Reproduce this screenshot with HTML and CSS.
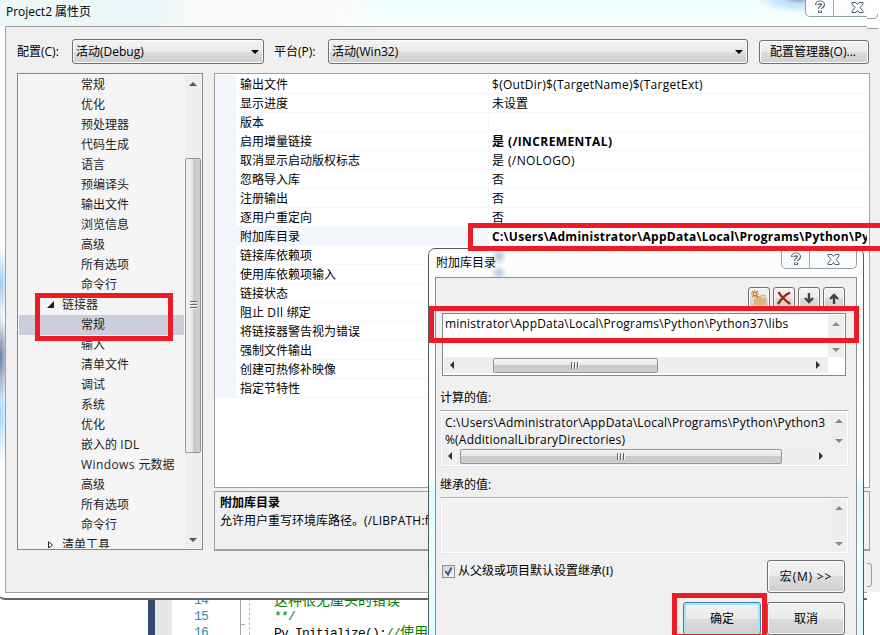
FILE: index.html
```html
<!DOCTYPE html>
<html lang="zh-CN">
<head>
    <meta charset="UTF-8">
    <title>Project2 属性页</title>
    <link rel="stylesheet" href="styles.css">
</head>
<body>
    <div class="editor">
        <div class="splitter"></div>
        <div class="margin"></div>
        <div class="numbers"><div>14</div><div>15</div><div>16</div></div>
        <div class="fold"></div>
        <div class="indent"></div>
        <div class="code">
            <div class="comment"><span class="cn">这种很无厘头的错误</span></div>
            <div class="comment">**/</div>
            <div>Py_Initialize();<span class="comment">//<span class="cn">使用</span></span></div>
        </div>
    </div>

    <div class="window main">
        <div class="title">Project2 属性页</div>
        <div class="client">
            <div class="config">
                <label class="config-label">配置(C):</label>
                <div class="combo combo-config">活动(Debug)<i class="arrow down black"></i></div>
                <label class="platform-label">平台(P):</label>
                <div class="combo combo-platform">活动(Win32)<i class="arrow down black"></i></div>
                <div class="button manager">配置管理器(O)...</div>
            </div>
            <div class="panels">
                <div class="tree">
                    <div class="items">
                        <div class="item">常规</div>
                        <div class="item">优化</div>
                        <div class="item">预处理器</div>
                        <div class="item">代码生成</div>
                        <div class="item">语言</div>
                        <div class="item">预编译头</div>
                        <div class="item">输出文件</div>
                        <div class="item">浏览信息</div>
                        <div class="item">高级</div>
                        <div class="item">所有选项</div>
                        <div class="item">命令行</div>
                        <div class="item parent"><svg width="8" height="8"><path d="M7 0v7H0z" fill="#222"/></svg>链接器</div>
                        <div class="item selected">常规</div>
                        <div class="item">输入</div>
                        <div class="item">清单文件</div>
                        <div class="item">调试</div>
                        <div class="item">系统</div>
                        <div class="item">优化</div>
                        <div class="item">嵌入的 <span class="wide">IDL</span></div>
                        <div class="item"><span class="wide">Windows </span>元数据</div>
                        <div class="item">高级</div>
                        <div class="item">所有选项</div>
                        <div class="item">命令行</div>
                        <div class="item parent"><svg width="8" height="8"><path d="M1.5 .8v6.4L5.5 4z" fill="#fff" stroke="#222"/></svg>清单工具</div>
                    </div>
                    <div class="scroll vertical tree-scroll">
                        <i class="arrow up"></i>
                        <div class="thumb"><span class="grip"></span></div>
                        <i class="arrow down"></i>
                    </div>
                </div>
                <div class="properties">
                    <div class="grid">
                        <div class="row"><span>输出文件</span><span class="macro-value">$(OutDir)$(TargetName)$(TargetExt)</span></div>
                        <div class="row"><span>显示进度</span><span>未设置</span></div>
                        <div class="row"><span>版本</span><span></span></div>
                        <div class="row"><span>启用增量链接</span><span class="bold wide">是 (/INCREMENTAL)</span></div>
                        <div class="row"><span>取消显示启动版权标志</span><span class="wide">是 (/NOLOGO)</span></div>
                        <div class="row"><span>忽略导入库</span><span>否</span></div>
                        <div class="row"><span>注册输出</span><span>否</span></div>
                        <div class="row"><span>逐用户重定向</span><span>否</span></div>
                        <div class="row current"><span>附加库目录</span><span class="bold path">C:\Users\Administrator\AppData\Local\Programs\Python\Python37\libs</span></div>
                        <div class="row"><span>链接库依赖项</span><span></span></div>
                        <div class="row"><span>使用库依赖项输入</span><span></span></div>
                        <div class="row"><span>链接状态</span><span></span></div>
                        <div class="row"><span>阻止 <b class="dll">Dll</b> 绑定</span><span></span></div>
                        <div class="row"><span>将链接器警告视为错误</span><span></span></div>
                        <div class="row"><span>强制文件输出</span><span></span></div>
                        <div class="row"><span>创建可热修补映像</span><span></span></div>
                        <div class="row"><span>指定节特性</span><span></span></div>
                    </div>
                    <div class="help">
                        <div class="bold">附加库目录</div>
                        <div>允许用户重写环境库路径。<span class="libpath">(/LIBPATH:folder)</span></div>
                    </div>
                </div>
            </div>
        </div>
        <div class="caption">
            <span class="help-btn"><svg width="12" height="14"><path d="M3 5C3 1.500 9 1.500 9 5C9 7 6 6.500 6 9M6 10.500V13" fill="none" stroke="#555968" stroke-width="4"/><path d="M3 4.500C3 1.500 9 1.500 9 4.500C9 7 6 6.500 6 9M6 10.700V12.300" fill="none" stroke="#fff" stroke-width="1.800"/></svg></span>
            <span class="close-btn"><svg width="13" height="11"><path d="M1 .5h4l1.500 2L8 .5h4v1.500L9 5.500l3 3.500v1.500H8l-1.500-2-1.500 2H1V9l3-3.500L1 2z" fill="#fff" stroke="#555968"/></svg></span>
        </div>
        <div class="edge edge-top"></div>
        <div class="edge edge-bottom"></div>
        <svg class="remains" width="11" height="606"><path d="M0 18.500H7Q10.500 18.500 10.500 14M0 28.500H11M0 563.500H2Q4.500 563.500 4.500 566V584Q4.500 586.500 2 586.500H0" fill="none" stroke="#999"/></svg>
    </div>

    <div class="window dialog">
        <div class="title">附加库目录</div>
        <div class="client">
            <div class="tools">
                <div class="button tool"><svg width="16" height="16"><path d="M5 6h4l1-1h5v10H3V9h2z" fill="#dcb67a"/><path d="M10.500 7h4" stroke="#fff"/><path d="M4 0v8M0 4h8M1 1l6 6M7 1L1 7" stroke="#c27d1a" stroke-width="1.100"/><circle cx="4" cy="4" r="1" fill="#fff"/></svg></div>
                <div class="button tool"><svg width="16" height="16"><path d="M2.500 2Q6 8 14 14M14 2.500Q7 6 2 14" fill="none" stroke="#a1260d" stroke-width="2.400"/></svg></div>
                <div class="button tool"><svg width="16" height="16"><path d="M8 3v9M4 8l4 4 4-4" fill="none" stroke="#424242" stroke-width="2.400"/></svg></div>
                <div class="button tool"><svg width="16" height="16"><path d="M8 14V5M4 9l4-4 4 4" fill="none" stroke="#424242" stroke-width="2.400"/></svg></div>
            </div>
            <div class="box edit">
                <div class="text">ministrator\AppData\Local\Programs\Python\Python37\libs</div>
                <div class="scroll vertical"><i class="arrow up"></i><i class="arrow down"></i></div>
                <div class="scroll horizontal"><i class="arrow left"></i><div class="thumb"><span class="grip"></span></div><i class="arrow right"></i></div>
            </div>
            <div class="label">计算的值:</div>
            <div class="box computed">
                <div class="text">C:\Users\Administrator\AppData\Local\Programs\Python\Python3<br>%(AdditionalLibraryDirectories)</div>
                <div class="scroll vertical"><i class="arrow up"></i><i class="arrow down"></i></div>
                <div class="scroll horizontal"><i class="arrow left"></i><div class="thumb"><span class="grip"></span></div><i class="arrow right"></i></div>
            </div>
            <div class="label">继承的值:</div>
            <div class="box inherited">
                <div class="text"></div>
                <div class="scroll vertical"><i class="arrow up"></i><i class="arrow down"></i></div>
            </div>
            <div class="inherit">
                <span class="check"><svg width="9" height="9"><path d="M1.500 4L4 7.500L7.500 .5" fill="none" stroke="#3f5795" stroke-width="2"/></svg></span>
                从父级或项目默认设置继承(<span class="serif">I</span>)
            </div>
            <div class="buttons">
                <div class="button macro">宏(M) &gt;&gt;</div>
                <div class="button ok">确定</div>
                <div class="button cancel">取消</div>
            </div>
        </div>
        <div class="caption">
            <span class="help-btn"><svg width="12" height="14"><path d="M3 5C3 1.500 9 1.500 9 5C9 7 6 6.500 6 9M6 10.500V13" fill="none" stroke="#555968" stroke-width="4"/><path d="M3 4.500C3 1.500 9 1.500 9 4.500C9 7 6 6.500 6 9M6 10.700V12.300" fill="none" stroke="#fff" stroke-width="1.800"/></svg></span>
            <span class="close-btn"><svg width="13" height="11"><path d="M1 .5h4l1.500 2L8 .5h4v1.500L9 5.500l3 3.500v1.500H8l-1.500-2-1.500 2H1V9l3-3.500L1 2z" fill="#fff" stroke="#555968"/></svg></span>
        </div>
    </div>

    <div class="mark mark-tree"></div>
    <div class="mark mark-path"></div>
    <div class="mark mark-edit"></div>
    <div class="mark mark-ok"></div>
</body>
</html>
```

FILE: styles.css
```css
* {
    box-sizing: border-box;
}
body {
    position: relative;
    margin: 0;
    width: 880px;
    height: 635px;
    overflow: hidden;
    background: #fff;
    color: #000;
    font: 12px/18px "Open Sans", "Noto Sans CJK SC", sans-serif;
    white-space: nowrap;
}
svg {
    display: block;
}
.bold {
    font-weight: bold;
}
.wide {
    letter-spacing: 0.4px;
}
.macro-value,
.path {
    letter-spacing: 0.27px;
}
.libpath {
    letter-spacing: 0.2px;
}
.dll {
    font-weight: normal;
    letter-spacing: 0.6px;
}
.serif {
    font-family: "Liberation Serif", serif;
}

/* code editor behind the windows */
.editor {
    position: absolute;
    left: 148px;
    top: 593px;
    width: 290px;
    height: 42px;
    display: flex;
    overflow: hidden;
    font: 13px/16px "Liberation Mono", "Noto Sans CJK SC", monospace;
    letter-spacing: -0.8px;
}
.splitter {
    width: 7px;
    background: #36486d;
}
.margin {
    width: 17px;
    background: #e6e7e8;
}
.numbers {
    width: 68px;
    padding-left: 22px;
    color: #2b91af;
}
.fold {
    width: 9px;
    border-left: 1px solid #a5a5a5;
    background: linear-gradient(#a5a5a5, #a5a5a5) 0 31px / 4px 1px no-repeat;
}
.indent {
    width: 25px;
    border-left: 1px dashed #bbb;
}
.comment {
    color: #008000;
}
.cn {
    font-size: 14px;
    letter-spacing: 0;
}
.code > div {
    height: 16px;
}

/* windows */
.window {
    position: absolute;
}
.window .client {
    background: #f0f0f0;
}
.main {
    left: -2px;
    top: -6px;
    width: 882px;
    height: 606px;
    padding: 6px 0 0 7px;
    border-bottom: 2px solid #606568;
    border-radius: 0 0 0 7px;
    background:
        radial-gradient(ellipse 10px 44px at 2px 363px, #667b9f, transparent),
        radial-gradient(ellipse 10px 40px at 2px 290px, #9fcbf3, transparent),
        radial-gradient(ellipse 10px 50px at 2px 420px, #a8d5f8, transparent),
        radial-gradient(ellipse 16px 5px at 800px 5px, #8a9db5, transparent),
        radial-gradient(ellipse 44px 13px at 802px 6px, #c4e6fb 50%, transparent),
        linear-gradient(100deg, #ebf8f7 0 160px, #fafafa 200px 340px, transparent 380px) 0 0 / 450px 32px no-repeat,
        linear-gradient(#effdfd, #f4ffff 24px, #fff 32px);
}
.main .title {
    height: 26px;
    line-height: 24px;
    padding-left: 1px;
}
.main .client {
    height: 567px;
    padding: 12px 0 0 11px;
    border: 1px solid #a0a0a0;
    border-right: 0;
}
.config {
    display: flex;
    height: 25px;
    line-height: 24px;
}
.config label {
    line-height: 26px;
}
.config-label {
    width: 55px;
}
.platform-label {
    width: 54px;
}
.combo,
.button {
    border: 1px solid #707070;
    border-radius: 3px;
    box-shadow: inset 0 0 0 1px #fbfbfb;
    background: linear-gradient(#f2f2f2, #ebebeb 50%, #dddddd 50%, #cfcfcf);
}
.combo {
    flex: none;
    display: flex;
    justify-content: space-between;
    align-items: center;
    padding: 0 4px 0 3px;
}
.combo-config {
    width: 192px;
    margin-right: 10px;
}
.combo-platform {
    width: 420px;
    margin-right: 11px;
}
.button {
    display: flex;
    justify-content: center;
    align-items: center;
}
.manager {
    flex: none;
    width: 110px;
    height: 24px;
    margin-top: 1px;
    padding-right: 2px;
}
.panels {
    display: flex;
    gap: 11px;
    margin-top: 9px;
}

/* arrows and scrollbars */
.arrow {
    flex: none;
    width: 0;
    height: 0;
    border: 4px solid transparent;
}
.arrow.down {
    border-top-color: #555;
    border-bottom: 0;
}
.arrow.up {
    border-bottom-color: #555;
    border-top: 0;
}
.arrow.left {
    border-right-color: #333;
    border-left: 0;
}
.arrow.right {
    border-left-color: #333;
    border-right: 0;
}
.arrow.black {
    border-top-color: #000;
}
.scroll {
    display: flex;
    align-items: center;
    background: #eeeeee;
}
.vertical {
    flex-direction: column;
    width: 16px;
    justify-content: space-between;
}
.thumb {
    flex: none;
    display: flex;
    align-items: center;
    justify-content: center;
    border: 1px solid #969696;
    border-radius: 2px;
    background: linear-gradient(#f3f3f3, #e6e6e6 48%, #c9c9cb 50%, #cfcfcf);
}
.grip {
    width: 9px;
    height: 7px;
    background: repeating-linear-gradient(90deg, #666 0 1px, #f5f5f5 1px 2px, transparent 2px 3px);
}
.tree {
    flex: none;
    display: flex;
    width: 186px;
    height: 477px;
    padding: 1px;
    border: 1px solid #828790;
    background: #f5f5f5;
}
.items {
    width: 166px;
    height: 473px;
    overflow: hidden;
}
.item {
    height: 20px;
    margin-right: 1px;
    padding-left: 62px;
    line-height: 19px;
    color: #1e1e1e;
}
.parent {
    display: flex;
    align-items: center;
    gap: 7px;
    padding: 0 0 1px 28px;
}
.selected {
    background: #cccedb;
}
.tree-scroll {
    justify-content: flex-start;
    padding-top: 7px;
    height: 473px;
}
.tree-scroll .thumb {
    width: 16px;
    height: 295px;
    margin: 72px 0 85px;
    background: linear-gradient(90deg, #f3f3f3, #e6e6e6 48%, #c9c9cb 50%, #cfcfcf);
}
.tree-scroll .grip {
    width: 7px;
    height: 9px;
    background: repeating-linear-gradient(#666 0 1px, #f5f5f5 1px 2px, transparent 2px 3px);
}
.properties {
    flex: none;
    width: 656px;
}
.grid {
    height: 415px;
    padding: 1px 2px 0 0;
    border: 1px solid #a0a0a0;
    background: #fff;
}
.row {
    display: grid;
    grid-template-columns: 252px 379px;
    height: 19px;
    border-left: 21px solid #f3f6fc;
}
.row > span {
    height: 19px;
    padding-left: 4px;
    border-bottom: 1px solid #f3f6fc;
    overflow: hidden;
    line-height: 19px;
}
.row > span + span {
    padding-left: 3px;
    border-left: 1px solid #f3f6fc;
}
.current > span:first-child {
    background: #f3f6fc;
}
.help {
    height: 60px;
    margin-top: 3px;
    padding: 2px 5px;
    border: 1px solid #a0a0a0;
    border-bottom-width: 2px;
}
.caption {
    position: absolute;
    display: flex;
    border: 1px solid #999ea3;
    border-top: 0;
    border-radius: 0 0 5px 5px;
    background: linear-gradient(#fff, #f7fafb);
}
.help-btn {
    width: 28px;
    border-right: 1px solid #a5aaaf;
}
.caption span {
    display: flex;
    align-items: center;
    justify-content: center;
}
.close-btn {
    flex: 1;
}
.main .caption {
    left: 807px;
    top: 4px;
    width: 75px;
    height: 19px;
}
.main .close-btn {
    padding-left: 2px;
}
.edge {
    position: absolute;
    left: 869px;
    width: 13px;
    background: #fff;
}
.edge-top {
    top: 6px;
    height: 28px;
}
.edge-bottom {
    top: 598px;
    height: 8px;
}
.remains {
    position: absolute;
    left: 869px;
    top: 6px;
}

/* directory dialog */
.dialog {
    left: 428px;
    top: 248px;
    width: 436px;
    height: 400px;
    padding: 0 6px;
    border: 1px solid #55595c;
    border-radius: 7px 7px 0 0;
    background:
        radial-gradient(ellipse 8px 10px at 70px 7px, #b4c7dc, transparent),
        radial-gradient(ellipse 8px 8px at 70px 24px, #b4c7dc, transparent),
        linear-gradient(#fcfcfc, #fff 180px, #fff 225px, #ddfbff 242px, #eaffff 300px, #ddfbff 100%);
}
.dialog .title {
    height: 28px;
    padding-left: 1px;
    line-height: 28px;
}
.dialog .client {
    height: 380px;
    padding: 9px 8px 0 6px;
    border: 1px solid #8b8e90;
}
.dialog .caption {
    right: 6px;
    top: 1px;
    width: 76px;
    height: 19px;
}
.tools {
    display: flex;
    justify-content: flex-end;
    gap: 3px;
    margin-right: 3px;
}
.tool {
    width: 22px;
    height: 22px;
}
.box {
    display: grid;
    grid-template-columns: minmax(0, 1fr) 16px;
    grid-template-rows: minmax(0, 1fr) 16px;
    padding: 1px 1px 2px;
    border: 1px solid #abadb3;
}
.box .text {
    overflow: hidden;
    padding-left: 1px;
    letter-spacing: 0.2px;
}
.box .vertical {
    padding: 7px 0 5px;
}
.box .vertical .arrow.up {
    border-bottom-color: #888;
}
.box .vertical .arrow.down {
    border-top-color: #888;
}
.horizontal {
    padding: 0 8px 0 6px;
}
.horizontal .thumb {
    height: 15px;
}
.horizontal .arrow.right {
    margin-left: auto;
}
.edit {
    height: 63px;
    width: 404px;
    margin-top: 4px;
    border-color: #828790;
    background: #fff;
}
.edit .text {
    line-height: 18px;
}
.edit .thumb {
    width: 165px;
    margin-left: 39px;
}
.label {
    height: 18px;
    margin-left: -2px;
}
.edit + .label {
    margin-top: 13px;
}
.computed,
.inherited {
    width: 409px;
    height: 57px;
    margin: 3px 0 0 -2px;
    border-color: #abadb3 #e2e8f0 #e2e8f0;
    box-shadow: inset 0 0 0 1px #fff;
}
.computed .text {
    padding: 2px 0 0 3px;
    line-height: 17px;
}
.computed .thumb {
    width: 322px;
    margin-left: 8px;
}
.computed + .label {
    margin-top: 9px;
}
.inherited {
    grid-template-rows: 1fr;
}
.inherit {
    display: flex;
    align-items: center;
    height: 18px;
    margin-top: 8px;
}
.check {
    width: 13px;
    height: 13px;
    margin-right: 3px;
    padding: 1px;
    border: 1px solid #8e8f8f;
    background: linear-gradient(135deg, #cfd3da, #f5f5f5);
}
.buttons {
    display: grid;
    grid-template-columns: 78px 78px;
    grid-auto-rows: 33px;
    gap: 9px 6px;
    justify-content: end;
    margin: -20px 3px 0 0;
}
.macro {
    grid-column: 2;
    letter-spacing: 0.8px;
}
.ok {
    border-color: #3c7fb1;
    box-shadow: inset 0 0 0 2px #a9e2f4;
}

/* red highlights */
.mark {
    position: absolute;
    border: 5px solid #ed1c24;
}
.mark-tree {
    left: 35px;
    top: 293px;
    width: 138px;
    height: 48px;
}
.mark-path {
    left: 468px;
    top: 223px;
    width: 412px;
    height: 28px;
    border-right: 0;
}
.mark-edit {
    left: 429px;
    top: 306px;
    width: 430px;
    height: 37px;
}
.mark-ok {
    left: 672px;
    top: 593px;
    width: 95px;
    height: 46px;
}
```
